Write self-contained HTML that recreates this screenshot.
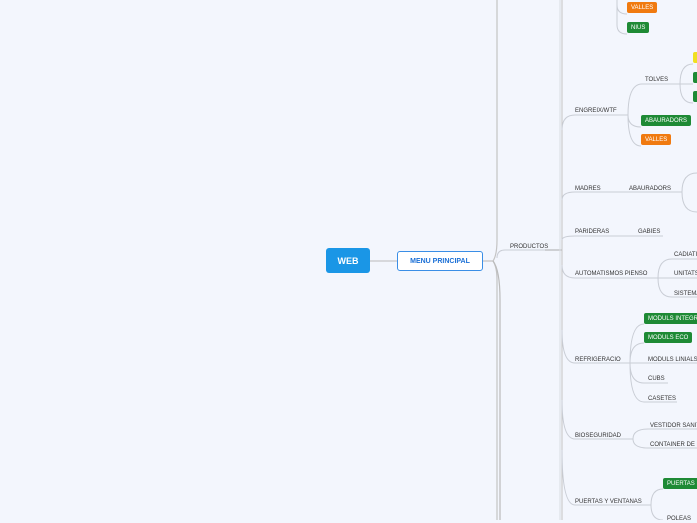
<!DOCTYPE html>
<html><head><meta charset="utf-8"><style>
body{margin:0;width:697px;height:520px;overflow:hidden;background:#f3f6fd;font-family:"Liberation Sans",sans-serif;position:relative}
.t{position:absolute;font-size:6px;color:#333;white-space:nowrap;line-height:8px;margin-top:2px}
.b{position:absolute;font-size:6px;color:#fff;white-space:nowrap;border-radius:2px;line-height:12px;padding:0 4px;height:11px}
.g{background:#1e8a35}.o{background:#f07a10}.y{background:#f0e020}
svg{position:absolute;left:0;top:0}
</style></head><body>
<svg width="697" height="520" fill="none" stroke="#c9cdd5" stroke-width="1">
<path d="M370 261H397" stroke="#bbb"/>
<path d="M483 261H493M493 261Q497 255 497 240V0M493 261Q497 267 497 280V520" stroke="#c4c4c4" stroke-width="1.2"/>
<path d="M493 261Q500 270 500 300V520" stroke="#bbb" stroke-width="1.2"/>
<path d="M497 258Q497 250 505 250H558" />
<path d="M545 250H562" stroke="#aaa"/>
<path d="M562 0V520" stroke="#c4c4c4"/>
<path d="M560 0V520" stroke="#dadde3"/>
<path d="M617 0V5Q617 14 627 14M617 5V25Q617 34 627 34"/>
<path d="M562 130Q562 115 575 115H628"/>
<path d="M615 115H628"/>
<path d="M628 115Q628 84 642 84H680M628 115Q628 127 641 127M628 115Q628 146 641 146"/>
<path d="M668 84H680M680 84Q680 64 693 64M680 84H693M680 84Q680 103 693 103"/>
<path d="M562 200Q562 192 575 192H682M682 192Q682 173 697 173M682 192Q682 212 697 212"/>
<path d="M562 240Q562 236 575 236H663"/>
<path d="M562 265Q562 278 575 278H658M658 278Q658 259 672 259H697M658 278H697M658 278Q658 297 672 297H697"/>
<path d="M562 330Q562 363 575 363H630M630 363Q630 324 644 324M630 363Q630 343 644 343M630 363H697M630 363Q630 383 644 383H668M630 363Q630 402 644 402H677"/>
<path d="M562 400Q562 439 575 439H633M633 439Q633 429 648 429H697M633 439Q633 448 648 448H697"/>
<path d="M562 450Q562 505 575 505H651M651 505Q651 489 663 489M651 505Q651 520 663 520"/>
</svg>
<div style="position:absolute;left:326px;top:248px;width:44px;height:25px;background:#1a96e6;border-radius:3px;color:#fff;font-weight:bold;font-size:9px;text-align:center;line-height:26px">WEB</div>
<div style="position:absolute;left:397px;top:251px;width:84px;height:18px;background:#fff;border:1px solid #3a8ee6;border-radius:3px;color:#1a6fd6;font-weight:bold;font-size:7px;text-align:center;line-height:20px">MENU PRINCIPAL</div>
<div class="t" style="left:510px;top:241px">PRODUCTOS</div>
<div class="b o" style="left:627px;top:2px">VALLES</div>
<div class="b g" style="left:627px;top:22px">NIUS</div>
<div class="t" style="left:575px;top:105px">ENGREIX/WTF</div>
<div class="t" style="left:645px;top:74px">TOLVES</div>
<div class="b y" style="left:693px;top:52px;width:8px;padding:0"></div>
<div class="b g" style="left:693px;top:72px;width:8px;padding:0"></div>
<div class="b g" style="left:693px;top:91px;width:8px;padding:0"></div>
<div class="b g" style="left:641px;top:115px">ABAURADORS</div>
<div class="b o" style="left:641px;top:134px">VALLES</div>
<div class="t" style="left:575px;top:183px">MADRES</div>
<div class="t" style="left:629px;top:183px">ABAURADORS</div>
<div class="t" style="left:575px;top:226px">PARIDERAS</div>
<div class="t" style="left:638px;top:226px">GABIES</div>
<div class="t" style="left:575px;top:268px">AUTOMATISMOS PIENSO</div>
<div class="t" style="left:674px;top:249px">CADIATI</div>
<div class="t" style="left:674px;top:268px">UNITATS</div>
<div class="t" style="left:674px;top:288px">SISTEMA</div>
<div class="t" style="left:575px;top:354px">REFRIGERACIO</div>
<div class="b g" style="left:644px;top:313px">MODULS INTEGRA</div>
<div class="b g" style="left:644px;top:332px">MODULS ECO</div>
<div class="t" style="left:648px;top:354px">MODULS LINIALS</div>
<div class="t" style="left:648px;top:373px">CUBS</div>
<div class="t" style="left:648px;top:393px">CASETES</div>
<div class="t" style="left:575px;top:430px">BIOSEGURIDAD</div>
<div class="t" style="left:650px;top:420px">VESTIDOR SANIT</div>
<div class="t" style="left:650px;top:439px">CONTAINER DE B</div>
<div class="t" style="left:575px;top:496px">PUERTAS Y VENTANAS</div>
<div class="b g" style="left:663px;top:478px">PUERTAS P</div>
<div class="t" style="left:667px;top:513px">POLEAS</div>
</body></html>
